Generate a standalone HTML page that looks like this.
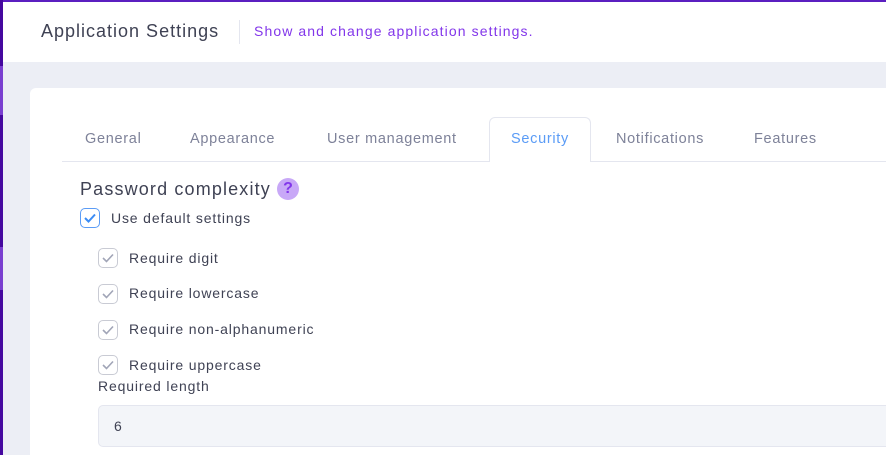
<!DOCTYPE html>
<html style="overflow:hidden"><head><style>
*{margin:0;padding:0;box-sizing:border-box}
html,body{width:886px;height:455px;overflow:hidden}
body{background:#eceef5;font-family:"Liberation Sans",sans-serif;position:relative}
.sb{position:absolute;left:0;top:0;width:3px;height:455px;background:#45089f}
.sb1{position:absolute;left:0;top:66px;width:3px;height:49px;background:#7a3fd0}
.sb2{position:absolute;left:0;top:247px;width:3px;height:43px;background:#7a3fd0}
.top{position:absolute;left:3px;top:0;width:883px;height:62px;background:#fff;border-top:2px solid #5b1fc0}
.title{position:absolute;left:41px;top:21px;font-size:18px;color:#3f4254;letter-spacing:1px}
.sep{position:absolute;left:239px;top:20px;width:1px;height:24px;background:#e4e6ef}
.sub{position:absolute;left:254px;top:23px;font-size:14px;color:#8236ea;letter-spacing:1.1px}
.card{position:absolute;left:30px;top:88px;width:870px;height:367px;background:#fff;border-radius:6px 6px 0 0}
.tabs{position:absolute;left:62px;top:161px;width:830px;height:1px;background:#e4e6ef}
.tab{position:absolute;top:131px;font-size:14.5px;color:#7e8299;letter-spacing:0.7px}
.act{position:absolute;left:489px;top:117px;width:102px;height:45px;background:#fff;border:1px solid #e4e6ef;border-bottom:none;border-radius:6px 6px 0 0}
h2{position:absolute;left:80px;top:179px;font-size:18px;font-weight:normal;color:#3f4254;letter-spacing:1.15px}
.q{position:absolute;left:277px;top:178px;width:22px;height:22px;border-radius:50%;background:#c8a8f7;color:#8236ea;font-weight:bold;font-size:16px;text-align:center;line-height:22px}
.cb{position:absolute;width:20px;height:20px;border:1.5px solid #c9cbd4;border-radius:5px}
.cb svg{position:absolute;left:3px;top:4px}
.lbl{position:absolute;font-size:14px;color:#3f4254;letter-spacing:0.85px}
.inp{position:absolute;left:98px;top:405px;width:800px;height:42px;background:#f3f5f9;border:1px solid #e4e6ef;border-radius:5px}
</style></head><body>
<div class="sb"></div><div class="sb1"></div><div class="sb2"></div>
<div class="top"></div>
<div class="title">Application Settings</div>
<div class="sep"></div>
<div class="sub">Show and change application settings.</div>
<div class="card"></div>
<div class="tabs"></div>
<div class="act"></div>
<div class="tab" style="left:85px">General</div>
<div class="tab" style="left:190px">Appearance</div>
<div class="tab" style="left:327px">User management</div>
<div class="tab" style="left:511px;color:#5b9cf6">Security</div>
<div class="tab" style="left:616px">Notifications</div>
<div class="tab" style="left:754px">Features</div>
<h2>Password complexity</h2>
<div class="q">?</div>
<div class="cb" style="left:80px;top:208px;border-color:#5b9cf6"><svg width="12" height="10"><path d="M1 5 L4.5 8.5 L11 1.5" stroke="#3b8cf5" stroke-width="2" fill="none"/></svg></div>
<div class="lbl" style="left:111px;top:210px">Use default settings</div>
<div class="cb" style="left:98px;top:248px"><svg width="12" height="10"><path d="M1 5 L4.5 8.5 L11 1.5" stroke="#a1a5b7" stroke-width="1.6" fill="none"/></svg></div>
<div class="lbl" style="left:129px;top:250px">Require digit</div>
<div class="cb" style="left:98px;top:284px"><svg width="12" height="10"><path d="M1 5 L4.5 8.5 L11 1.5" stroke="#a1a5b7" stroke-width="1.6" fill="none"/></svg></div>
<div class="lbl" style="left:129px;top:285px">Require lowercase</div>
<div class="cb" style="left:98px;top:320px"><svg width="12" height="10"><path d="M1 5 L4.5 8.5 L11 1.5" stroke="#a1a5b7" stroke-width="1.6" fill="none"/></svg></div>
<div class="lbl" style="left:129px;top:321px">Require non-alphanumeric</div>
<div class="cb" style="left:98px;top:355px"><svg width="12" height="10"><path d="M1 5 L4.5 8.5 L11 1.5" stroke="#a1a5b7" stroke-width="1.6" fill="none"/></svg></div>
<div class="lbl" style="left:129px;top:357px">Require uppercase</div>
<div class="lbl" style="left:98px;top:378px">Required length</div>
<div class="inp"></div>
<div class="lbl" style="left:114px;top:418px">6</div>
</body></html>
